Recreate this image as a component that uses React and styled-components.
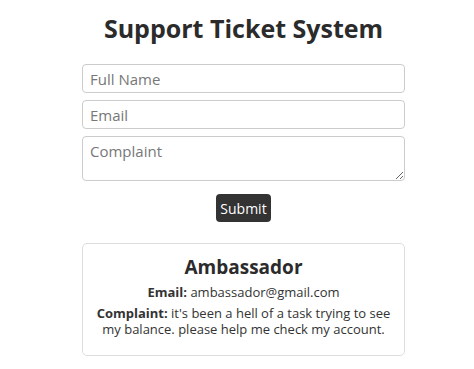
import React from "react";
import styled, { createGlobalStyle } from "styled-components";

const GlobalStyle = createGlobalStyle`
  body {
    margin: 0;
    background: #fff;
    font-family: "Open Sans", "DejaVu Sans", sans-serif;
    color: #333;
  }
`;

const Shell = styled.div`
  padding-left: 13px;
`;

const Page = styled.div`
  max-width: 323px;
  margin: 0 auto;
  padding-top: 12px;
`;

const Title = styled.h1`
  margin: 0 0 20px;
  font-size: 25px;
  line-height: 32px;
  font-weight: 700;
  text-align: center;
  color: #2b2b2b;
`;

const Form = styled.form`
  display: flex;
  flex-direction: column;
  gap: 7px;
`;

const Input = styled.input`
  box-sizing: border-box;
  height: 29px;
  padding: 0 7px;
  border: 1px solid #ccc;
  border-radius: 4px;
  font-family: inherit;
  font-size: 15px;
  color: #333;
  &::placeholder {
    color: #777;
  }
`;

const TextArea = styled.textarea`
  box-sizing: border-box;
  height: 45px;
  padding: 4px 7px;
  border: 1px solid #ccc;
  border-radius: 4px;
  font-family: inherit;
  font-size: 15px;
  color: #333;
  resize: vertical;
  &::placeholder {
    color: #777;
  }
`;

const Button = styled.button`
  align-self: center;
  box-sizing: border-box;
  height: 28px;
  width: 55px;
  margin-top: 6px;
  padding: 0;
  border: none;
  border-radius: 4px;
  background: #333;
  color: #fff;
  font-family: inherit;
  font-size: 14px;
  cursor: pointer;
`;

const Card = styled.div`
  margin-top: 21px;
  padding: 10px 8px 18px;
  border: 1px solid #ddd;
  border-radius: 5px;
  text-align: center;
`;

const Name = styled.h2`
  margin: 0 0 4px;
  font-size: 19px;
  line-height: 26px;
  font-weight: 700;
  color: #2b2b2b;
`;

const Line = styled.p`
  margin: 0 0 5px;
  font-size: 13px;
  line-height: 16px;
  &:last-child {
    margin-bottom: 0;
  }
`;

const tickets = [
  {
    name: "Ambassador",
    email: "ambassador@gmail.com",
    complaint:
      "it's been a hell of a task trying to see my balance. please help me check my account.",
  },
];

export default function App() {
  return (
    <Shell>
      <GlobalStyle />
      <Page>
        <Title>Support Ticket System</Title>
        <Form onSubmit={(e) => e.preventDefault()}>
          <Input type="text" placeholder="Full Name" />
          <Input type="email" placeholder="Email" />
          <TextArea placeholder="Complaint" />
          <Button type="submit">Submit</Button>
        </Form>
        {tickets.map((t) => (
          <Card key={t.email}>
            <Name>{t.name}</Name>
            <Line>
              <strong>Email:</strong> {t.email}
            </Line>
            <Line>
              <strong>Complaint:</strong> {t.complaint}
            </Line>
          </Card>
        ))}
      </Page>
    </Shell>
  );
}
